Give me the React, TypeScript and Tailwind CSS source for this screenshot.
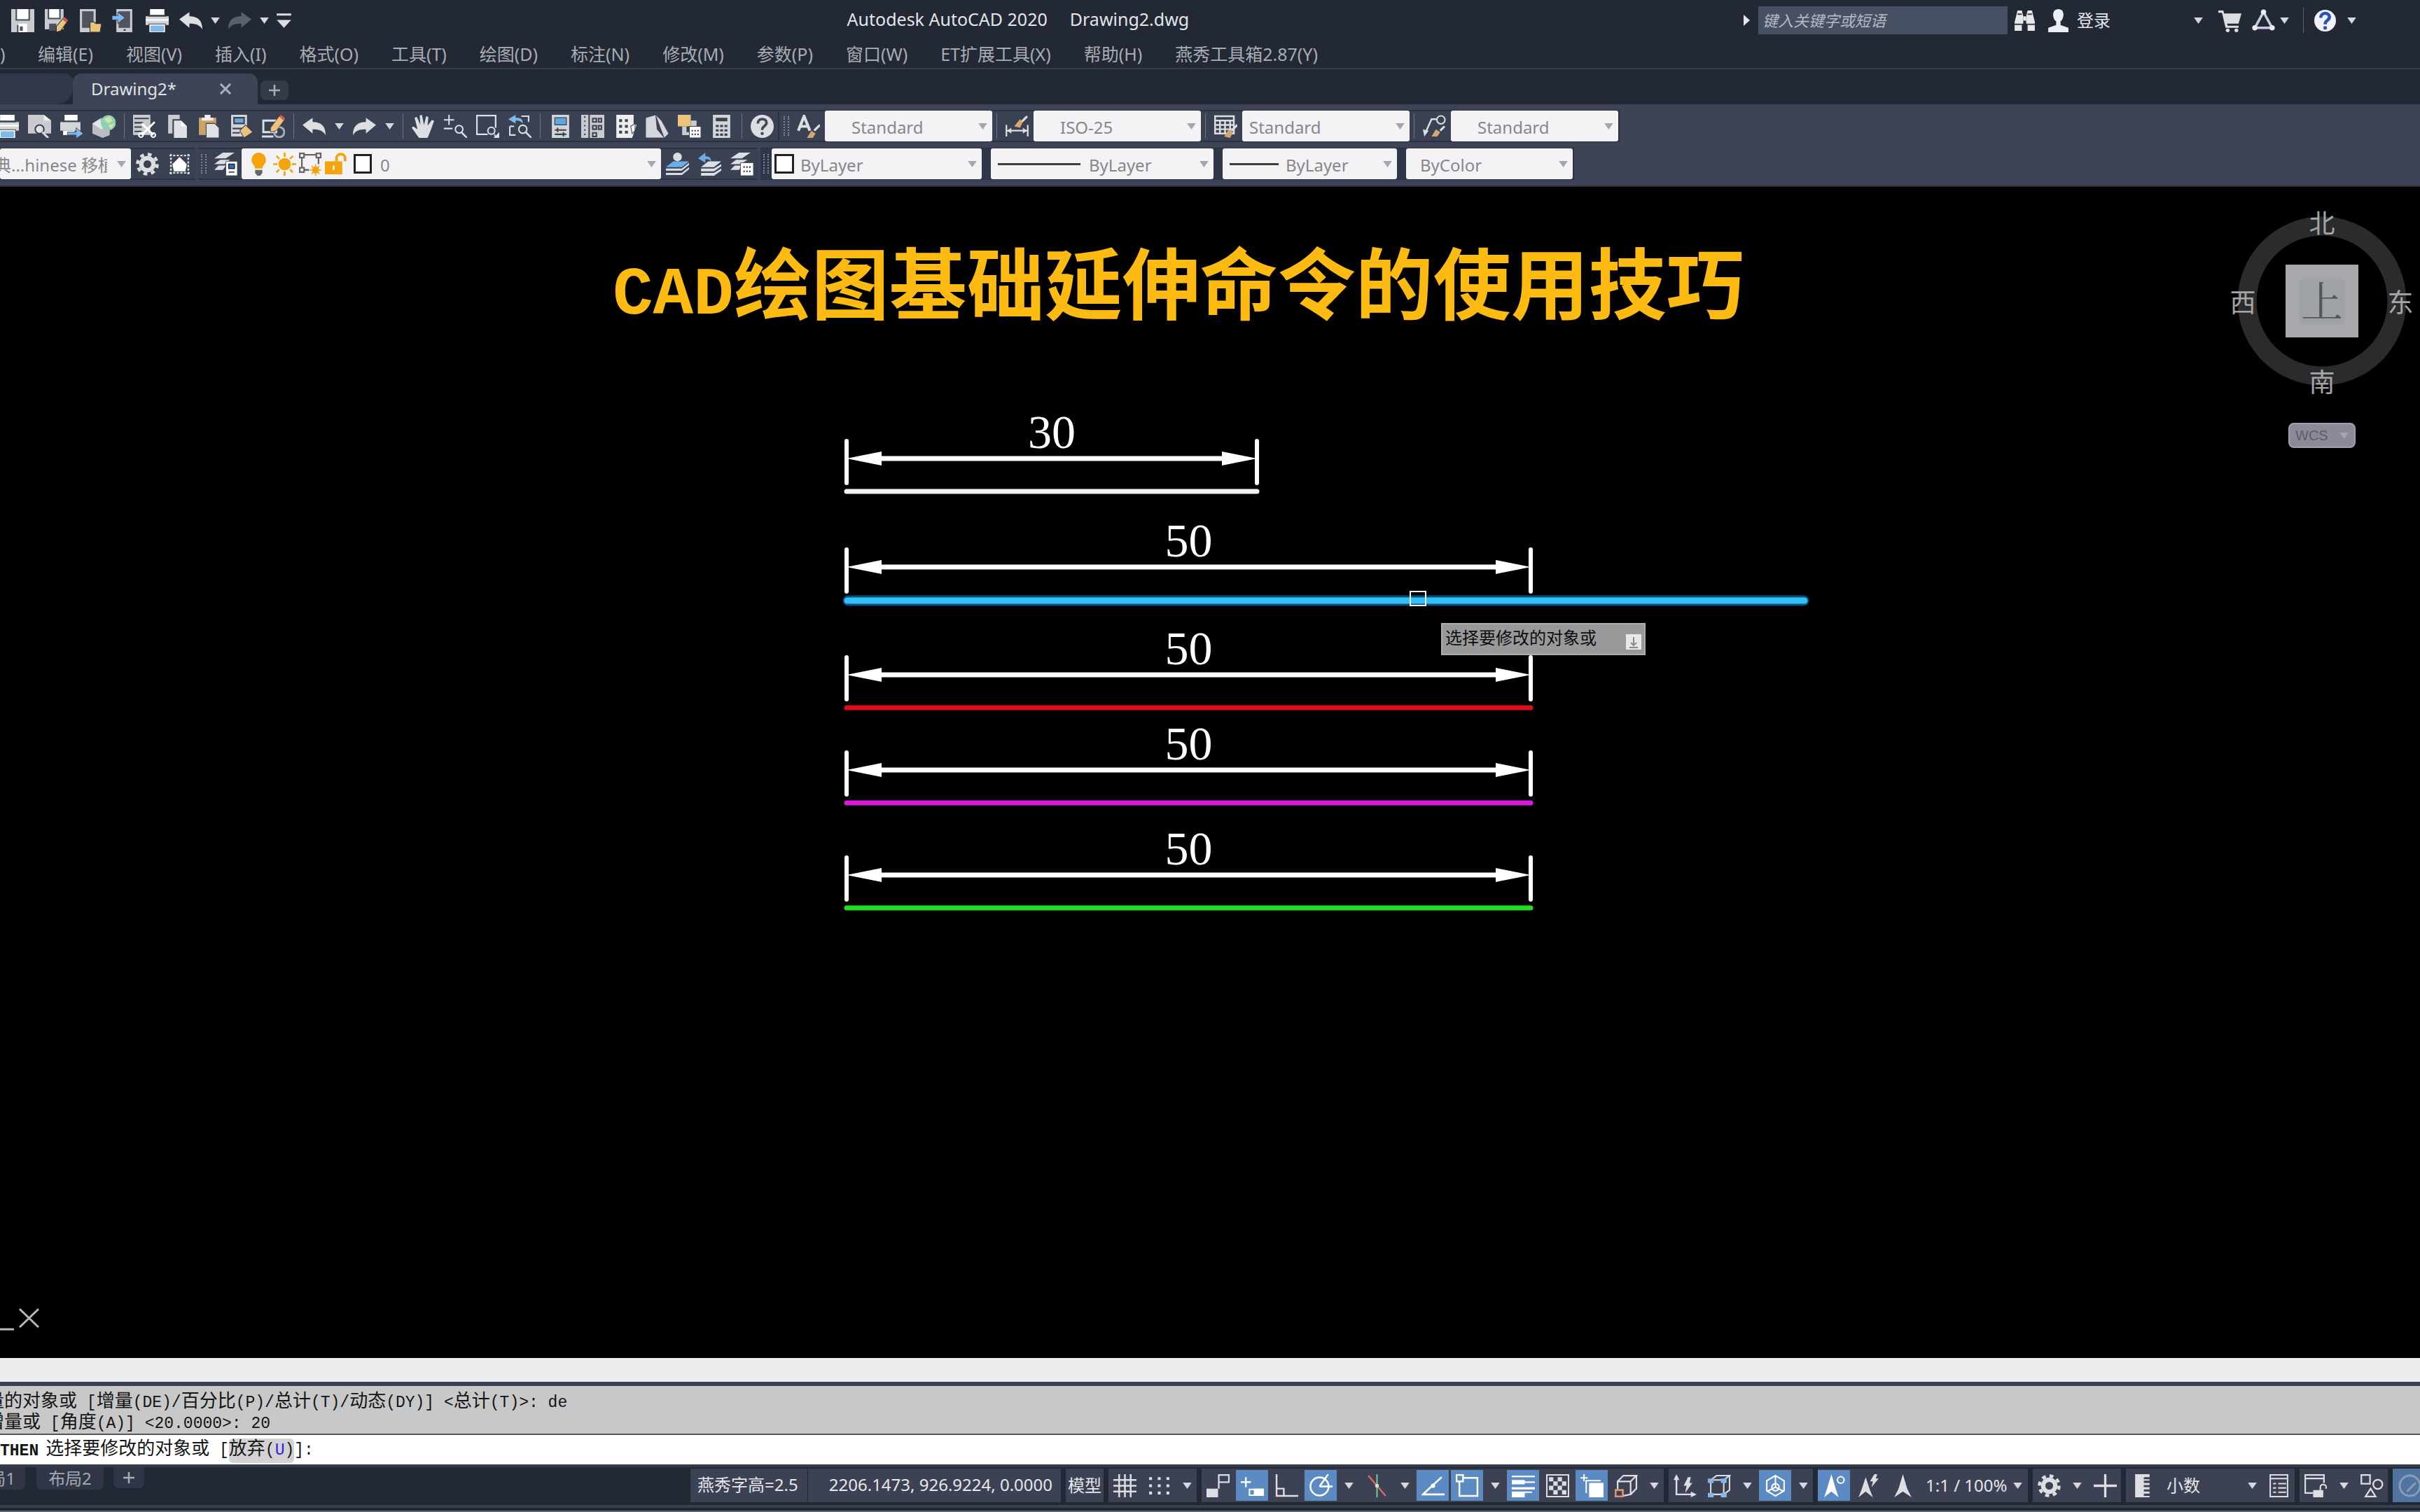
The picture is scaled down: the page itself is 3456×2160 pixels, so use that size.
import type { ReactNode } from "react";

const LIGHT = "#dcdee2";
const BLUE = "#7fb8ea";
const ORANGE = "#f5a30a";
const SAND = "#ecc477";

// every icon is drawn on a 16 x 16 grid
const icons: Record<string, ReactNode> = {
  save: (
    <>
      <path fill="#c9cbd0" d="M0 0h16v16H0z" />
      <path fill="#fff" d="M4 0h8v7H4zM5 10h6v6H5z" />
      <path fill="#4a505e" d="M3 0h1v7h8V0h1v8H3zM4 11h1v5H4zM6 12h2v3H6z" />
    </>
  ),
  saveAs: (
    <>
      <path fill="#c9cbd0" d="M0 0h13v14H0z" />
      <path fill="#fff" d="M3 0h7v6H3z" />
      <path fill="#4a505e" d="M2 0h1v6h7V0h1v7H2zM3 10h5v5H3z" />
      <path fill={SAND} stroke="#2a303b" strokeWidth=".5" d="M8 12l5-6 3 2-5 7-3 1z" />
      <path fill="#d9534f" d="M12 7l1.500-1.500L16 7.500 15 9.500z" />
    </>
  ),
  openMobile: (
    <>
      <path fill="#c9cbd0" d="M1 0h11v16H1z" />
      <path fill="#4f545f" d="M2.500 1.500h8V13h-8z" />
      <path fill={SAND} stroke="#2a303b" strokeWidth=".5" d="M8 16V9h3l1 1h4l-1 6z" />
    </>
  ),
  saveMobile: (
    <>
      <path fill="#c9cbd0" d="M3 0h11v16H3z" />
      <path fill="#4f545f" d="M4.500 1.500h8V13h-8z" />
      <path fill={BLUE} stroke="#2a303b" strokeWidth=".4" d="M0 4.500h4V2l5 4-5 4V7.500H0z" />
      <path fill="#333" d="M8 14h1.500v1H8z" />
    </>
  ),
  print: (
    <>
      <path fill="#fff" d="M3 0h10v5H3z" />
      <path fill="#d3d5d9" d="M0 5h16v6H0z" />
      <path fill="#fff" d="M0 7h16v1H0z" />
      <path fill="#39404e" d="M2 4h12v1.200H2zM2 10h12v1H2z" />
      <path fill={BLUE} stroke="#fff" strokeWidth=".8" d="M3 11h10v5H3z" />
    </>
  ),
  undo: <path fill={LIGHT} d="M0 7l7-5v3c6 0 9 3 9 9-2-3-4-4-9-4v3z" />,
  redo: <path fill={LIGHT} d="M16 7L9 2v3c-6 0-9 3-9 9 2-3 4-4 9-4v3z" />,
  redoOff: <path fill="#5b616c" d="M16 7L9 2v3c-6 0-9 3-9 9 2-3 4-4 9-4v3z" />,
  customize: <path fill={LIGHT} d="M3 3h10v1.500H3zM3 7.500h10L8 13z" />,
  preview: (
    <>
      <path fill="#c9cbd0" d="M0 0h11l5 4v9H0z" />
      <path fill="#eee" d="M11 0v4h5z" />
      <circle cx="8" cy="10" r="3" fill="#dfe1e4" stroke="#39404e" />
      <path stroke={LIGHT} strokeWidth="1.500" d="M10 12l4 4" />
    </>
  ),
  publish: (
    <>
      <path fill="#fff" d="M3 0h9v5H3z" />
      <path fill="#d3d5d9" d="M0 5h14v6H0z" />
      <path fill="#39404e" d="M2 4h11v1H2z" />
      <path fill="#fff" d="M2 11h8v3H2z" />
      <path fill={BLUE} stroke="#39404e" strokeWidth=".4" d="M5 12h6V9l5 4-5 3.500V14H5z" />
    </>
  ),
  globe: (
    <>
      <path fill="#b9bcc2" d="M0 6l6-4 6 6v6l-5 2-7-3z" />
      <path fill="#e4e5e8" d="M0 6l5-3 4 5-3 2z" />
      <circle cx="11" cy="5.500" r="5.200" fill="#8fd0b4" />
      <path fill="#cfe6a5" d="M8 3l4-2 2 3-3 2zM11 7l4-1-2 4z" />
    </>
  ),
  cut: (
    <>
      <path fill="#c9cbd0" d="M0 0h12v14H0z" />
      <path stroke="#39404e" d="M1 2.500h10M1 5.500h6M1 8.500h5M1 11.500h5" />
      <path stroke="#fff" strokeWidth="1.400" d="M6 6l8 8M15 5l-9 9" />
      <circle cx="5.500" cy="14" r="1.500" fill="none" stroke="#fff" />
      <circle cx="14" cy="14" r="1.500" fill="none" stroke="#fff" />
    </>
  ),
  copy: (
    <>
      <path fill="#c9cbd0" d="M2 0h8v3H5v10H2z" />
      <path fill="#dfe1e4" d="M6 4h5l4 4v8H6z" />
      <path fill="#fff" d="M11 4v4h4z" />
    </>
  ),
  paste: (
    <>
      <path fill="#c8a266" d="M1 2h12v12H1z" />
      <path fill="#eee" d="M5 0h4v2h2v2H3V2h2z" />
      <path fill="#dfe1e4" stroke="#39404e" strokeWidth=".5" d="M6 6h6l3 3v7H6z" />
    </>
  ),
  match: (
    <>
      <path fill="#d3d5d9" d="M1 0h11v15H1z" />
      <path fill="#6fa9dc" stroke="#39404e" d="M3 2h7v4H3z" />
      <path stroke="#39404e" d="M2 9.500h9M2 12.500h5" />
      <path fill={SAND} stroke="#39404e" strokeWidth=".5" d="M7 11l4-4 5 5-6 4z" />
    </>
  ),
  blockEdit: (
    <>
      <path fill="none" stroke={LIGHT} strokeWidth="1.400" d="M1 4h9v8H1zM0 15h8" />
      <circle cx="12" cy="12" r="3.500" fill="none" stroke="#a9adb5" strokeWidth="1.400" />
      <path fill={SAND} stroke="#39404e" strokeWidth=".4" d="M6 9l6-8 4 2-6 8-4 1z" />
      <path fill="#d9534f" d="M12 1l1-1 3 2-1 2z" />
    </>
  ),
  hand: (
    <path fill={LIGHT} d="M5 16L0 9l1-1 3 2L2 2l1.500-.5L6 7l-.5-6.500L7 0l1.500 7L10 1l1.500.4L11 7.500l3-4 1.500.7L13 11l-2 5z" />
  ),
  zoomRealtime: (
    <>
      <path stroke={LIGHT} d="M3.500 0v7M0 3.500h7M0 9.500h6" />
      <circle cx="10.500" cy="10" r="2.600" fill="none" stroke={LIGHT} />
      <path stroke={LIGHT} strokeWidth="1.200" d="M12 12l4 4" />
    </>
  ),
  zoomWindow: (
    <>
      <path fill="none" stroke={LIGHT} strokeWidth="1.100" d="M13.500 9V.5H.5v13H8" />
      <circle cx="10.500" cy="11" r="2.400" fill="none" stroke={LIGHT} />
      <path fill={LIGHT} d="M16 12v4h-4zM12 12l2 3-1 1z" />
    </>
  ),
  zoomPrevious: (
    <>
      <path fill={BLUE} d="M0 3l5-3v2c4 0 5 1 5 4-2-2-3-2-5-2v2z" />
      <path fill="none" stroke={LIGHT} d="M9 1h5v4M1 8v6h4M1 8h3" />
      <circle cx="10" cy="10" r="2.800" fill="none" stroke={LIGHT} />
      <path stroke={LIGHT} strokeWidth="1.200" d="M12 12l4 4" />
    </>
  ),
  properties: (
    <>
      <path fill="#d3d5d9" d="M2 0h12v16H2z" />
      <path fill="#5fa6e2" stroke="#39404e" strokeWidth=".6" d="M4 2h8v5H4z" />
      <path stroke="#39404e" d="M4 10.500h8M4 13.500h8M6 9v3M10 12v3" />
    </>
  ),
  designCenter: (
    <>
      <path fill="#c9cbd0" d="M0 0h16v16H0z" />
      <path stroke="#39404e" d="M5.500 0v16" />
      <path stroke="#39404e" strokeDasharray="1 2" d="M2.500 1v14" />
      <path fill="none" stroke="#39404e" d="M8 2.500h2.500V5H8zM12 2.500h2V5h-2zM8 7.500h2.500V10H8zM12 7.500h2V10h-2zM8 12.500h2.500V15H8z" />
    </>
  ),
  toolPalettes: (
    <>
      <path fill="#eceded" d="M2 0h12v6l2 1-3 9H2z" />
      <path fill="#39404e" d="M4 3h2v2H4zM8 3h2v2H8zM4 7h2v2H4zM8 7h2v2H8zM4 11h2v2H4zM8 11h2v2H8z" />
      <path fill="#fff" stroke="#39404e" strokeWidth=".5" d="M12 8l3-2v5l-2 2z" />
    </>
  ),
  sheetSet: <path fill="#d3d5d9" stroke="#39404e" strokeWidth=".4" d="M0 2l7-2 4 4 5 9-3 3H0zM7 0l1 10 5 6" />,
  markup: (
    <>
      <path fill={SAND} d="M0 0h9v8H0z" />
      <path fill="#c9cbd0" d="M9 4h4v6H9zM3 8h3v4h3V9h4l-3 5H3z" />
      <path fill="#fff" stroke="#39404e" strokeWidth=".5" d="M8 8h8v8H8z" />
      <path stroke="#39404e" d="M9.500 11h5M9.500 13.500h5" strokeDasharray="1 1" />
    </>
  ),
  calculator: (
    <>
      <path fill="#d3d5d9" d="M2 0h12v16H2z" />
      <path fill="#39404e" d="M4 2h8v2.500H4zM4 7h2v1.500H4zM7 7h2v1.500H7zM10 7h2v1.500h-2zM4 10h2v1.500H4zM7 10h2v1.500H7zM10 10h2v1.500h-2zM4 13h2v1.500H4zM7 13h2v1.500H7zM10 13h2v1.500h-2z" />
    </>
  ),
  help: (
    <>
      <circle cx="8" cy="8" r="8" fill={LIGHT} />
      <path fill="none" stroke="#454b58" strokeWidth="1.800" d="M5 6c0-4 6-4 6-.5C11 8 8 7.500 8 10.500" />
      <circle cx="8" cy="13" r="1.100" fill="#454b58" />
    </>
  ),
  textStyle: (
    <>
      <path fill="none" stroke={LIGHT} strokeWidth="2" d="M1 11L5 1l4 10M2.500 8h5" />
      <path stroke={LIGHT} strokeWidth="1.600" d="M12 11l4-4" />
      <path fill="#d2a871" d="M7 16l3-5 3 2-2 3z" />
    </>
  ),
  dimStyle: (
    <>
      <path stroke={LIGHT} strokeWidth="1.100" d="M.6 7v8M15.400 7v8M1 11h14" />
      <path fill={LIGHT} d="M1 11l3-2v4zM15 11l-3-2v4z" />
      <path stroke={LIGHT} strokeWidth="1.500" d="M11 5l4-4" />
      <path fill="#d2a871" d="M6 8l4-5 2 2-2 4z" />
    </>
  ),
  tableStyle: (
    <>
      <path fill="none" stroke={LIGHT} strokeWidth="1.200" d="M.6 1h13v12H.6zM.6 4h13M.6 7h13M.6 10h13M4 4v9M7.500 4v9M11 4v9" />
      <path stroke={LIGHT} strokeWidth="1.500" d="M12 11l4-4" />
      <path fill="#d2a871" d="M7 15l3-5 3 2-2 4z" />
    </>
  ),
  leaderStyle: (
    <>
      <path fill="none" stroke={LIGHT} strokeWidth="1.200" d="M2 12l4-9h4" />
      <path fill={LIGHT} d="M0 10l4 1-3 4z" />
      <circle cx="12.500" cy="3.500" r="2.800" fill="none" stroke={LIGHT} />
      <path stroke={LIGHT} strokeWidth="1.500" d="M12 11l3-3" />
      <path fill="#d2a871" d="M6 15l3-5 3 2-2 3z" />
    </>
  ),
  gear: (
    <>
      <circle cx="8" cy="8" r="6.800" fill="none" stroke={LIGHT} strokeWidth="2.200" strokeDasharray="2.700 2.640" />
      <circle cx="8" cy="8" r="4.200" fill="none" stroke={LIGHT} strokeWidth="3" />
    </>
  ),
  workspaceSave: (
    <>
      <path stroke={LIGHT} strokeDasharray="1.500 1" d="M1 2h14M1 14h14M2 1v14M14 1v14" strokeWidth="1.200" />
      <path fill="#fff" d="M8 3l5 5-1 5H4L3 8z" />
    </>
  ),
  layerProps: (
    <>
      <path fill={LIGHT} d="M6 0h8l-6 4H0zM4 5h7L7 8H0zM3 9h5l-2 3H0z" />
      <path fill="#fff" stroke="#39404e" strokeWidth=".4" d="M8 6h8v10H8z" />
      <path fill="#2f6fb4" stroke="#222" strokeWidth=".7" d="M10 8h4v3h-4z" />
      <path stroke="#222" strokeWidth=".7" d="M10 13.500h4" />
    </>
  ),
  layerCurrent: (
    <>
      <path fill="#6aaee8" d="M5 6h11l-5 4H0z" />
      <path fill={LIGHT} d="M0 11h11l5-4v1.500l-5 4H0zM0 14h11l5-4v1.500l-5 4H0z" />
      <circle cx="8" cy="3" r="3" fill={LIGHT} />
    </>
  ),
  layerPrevious: (
    <>
      <path fill="#6aaee8" d="M0 4l5-4v2.500c3 0 4 1 4 3.500-1-1-2-1.500-4-1.500V7z" />
      <path fill={LIGHT} d="M7 6h9l-5 4H2zM2 11h9l5-3v1.500l-5 3.500H2zM2 14h9l5-3v1.500L11 16H2z" />
    </>
  ),
  layerStates: (
    <>
      <path fill={LIGHT} d="M6 0h8l-6 4H0zM4 5h8L7 8H0zM3 9h5l-2 3H0z" />
      <path fill="#fff" stroke="#39404e" strokeWidth=".4" d="M7 7h9v9H7z" />
      <path stroke="#333" strokeDasharray="1 1" d="M9 10h5M9 13h5" />
    </>
  ),
  bulb: (
    <>
      <path fill={ORANGE} d="M8 0a5 5 0 015 5c0 3-2 3-2.500 6h-5C5 8 3 8 3 5a5 5 0 015-5z" />
      <path fill="#666" d="M5.500 12h5v2L9 16H7l-1.500-2z" />
    </>
  ),
  sun: (
    <>
      <circle cx="8" cy="8" r="4.300" fill={ORANGE} />
      <path stroke={ORANGE} strokeWidth="1.300" d="M8 0v3M8 13v3M0 8h3M13 8h3M2.300 2.300l2 2M11.700 11.700l2 2M13.700 2.300l-2 2M4.300 11.700l-2 2" />
    </>
  ),
  viewportSun: (
    <>
      <path fill="none" stroke="#666" strokeWidth="1.100" d="M4 1.500h8M4 12h3M2 4v6M13.500 3v5M.5.5h3v3h-3zM12 .5h3v3h-3zM.5 10.500h3v3h-3z" />
      <circle cx="11.500" cy="12" r="2.400" fill={ORANGE} />
      <path stroke={ORANGE} d="M11.500 8v8M7.500 12h8M8.800 9.300l5.400 5.400M14.200 9.300l-5.400 5.400" strokeWidth=".8" />
    </>
  ),
  unlock: (
    <>
      <path fill={ORANGE} d="M0 6h12v9H0z" />
      <path fill="none" stroke={ORANGE} strokeWidth="1.800" d="M8 6V4c0-4 6-4 6 0v2" />
      <path stroke="#fff" strokeWidth="1.200" d="M6 9v3" />
    </>
  ),
  binoculars: (
    <>
      <path fill="#e8e8ea" d="M3 1h3l1 4v5H6v5H1V9zM13 1h-3L9 5v5h1v5h5V9z" />
      <path stroke="#3a414d" d="M1 10.500h5M10 10.500h5M3 3.500h3M10 3.500h3" />
      <path fill="#e8e8ea" d="M7 5h2v3H7z" />
    </>
  ),
  user: <path fill="#eceef2" d="M8 0c5 0 4 7 1.500 8.500V11L15 13v3H1v-3l5.500-2V8.500C4 7 3 0 8 0z" />,
  cart: (
    <>
      <path fill={LIGHT} d="M0 1h3.500L4 3h12l-2 7H6l.5 1.500H14V13H5L2.500 2.500H0z" />
      <circle cx="6.500" cy="14.700" r="1.300" fill={LIGHT} />
      <circle cx="12.500" cy="14.700" r="1.300" fill={LIGHT} />
    </>
  ),
  appStore: (
    <>
      <path fill="none" stroke="#c7cbe6" strokeWidth="1.700" d="M8 2L2 13h12z" />
      <circle cx="8" cy="2" r="1.800" fill="#eceef2" />
      <circle cx="2" cy="13" r="1.800" fill="#eceef2" />
      <circle cx="14" cy="13" r="1.800" fill="#eceef2" />
    </>
  ),
  helpBlue: (
    <>
      <circle cx="8" cy="8" r="7.500" fill="#f1f3f8" />
      <path fill="none" stroke="#2c51b0" strokeWidth="2.200" d="M5 6c0-4 6-4 6-.5C11 8 8 7.500 8 10.500" />
      <circle cx="8" cy="13" r="1.300" fill="#2c51b0" />
    </>
  ),
  grid: <path stroke={LIGHT} strokeWidth="1.200" d="M4 0v16M8 0v16M12 0v16M0 4h16M0 8h16M0 12h16" />,
  snap: <path fill={LIGHT} d="M1 2h2v2H1zM7 2h2v2H7zM13 2h2v2h-2zM1 7h2v2H1zM7 7h2v2H7zM13 7h2v2h-2zM1 12h2v2H1zM7 12h2v2H7zM13 12h2v2h-2z" />,
  infer: (
    <>
      <path fill={LIGHT} d="M0 10h8v6H0z" />
      <path fill="none" stroke={LIGHT} strokeWidth="1.100" d="M8.500.5h7v5h-7zM8.500 5v5" />
    </>
  ),
  dynInput: (
    <>
      <path stroke="#fff" strokeWidth="1.200" d="M3.500 2v7M0 5.500h7" />
      <path fill="none" stroke="#fff" d="M6 10.500h9.500v4H6z" />
      <path fill="#fff" d="M9 10h7v5H9z" />
    </>
  ),
  ortho: <path fill="none" stroke={LIGHT} strokeWidth="1.200" d="M1 0v15h15M1 10h5v5" />,
  polar: (
    <>
      <circle cx="7" cy="8.500" r="6.300" fill="none" stroke="#fff" strokeWidth="1.200" />
      <path fill="none" stroke="#fff" strokeWidth="1.200" d="M7 8.500h9M7 8.500L13 0" />
    </>
  ),
  isodraft: (
    <>
      <path stroke="#6fd08a" d="M8 0v16" />
      <path stroke="#e0696b" strokeWidth="1.100" d="M2 1l12 14" />
      <circle cx="8" cy="8" r="1.300" fill={LIGHT} />
    </>
  ),
  snapTrack: (
    <>
      <path fill="none" stroke="#fff" strokeWidth="1.300" d="M14 2L1 14h15" />
      <circle cx="8" cy="8" r="1.500" fill="#fff" />
    </>
  ),
  osnap: <path fill="none" stroke="#fff" strokeWidth="1.200" d="M.5.500h4.500v4.500H.5zM5 2.500h10V15H2.500V5" />,
  lineweight: <path fill="#fff" d="M0 1h16v1H0zM0 4h9v3H0zM9 5h7v1H9zM0 9h16v1.500H0zM0 12h9v4H0zM9 12h5v1H9z" />,
  transparency: (
    <>
      <path fill="none" stroke={LIGHT} d="M.5.500h15v15H.5z" />
      <path fill={LIGHT} d="M2 2h3v3H2zM8 2h3v3H8zM5 5h3v3H5zM11 5h3v3h-3zM2 8h3v3H2zM8 8h3v3H8zM5 11h3v3H5zM11 11h3v3h-3z" />
    </>
  ),
  cycling: (
    <>
      <path stroke="#fff" d="M2.500 0v5M0 2.500h5" />
      <path fill="none" stroke="#fff" d="M4 13V4.500h10" />
      <path fill="#fff" d="M6 6h10v10H6z" />
    </>
  ),
  osnap3d: (
    <>
      <path fill="none" stroke={LIGHT} strokeWidth="1.100" d="M6 15l5-1V5H2v6M2 5l4-4h9L11 5M15 1v9l-4 4" />
      <path fill="none" stroke="#dc9468" strokeWidth="1.300" d="M.6 11h5v4.400h-5z" />
    </>
  ),
  dynUcs: (
    <>
      <path fill="none" stroke={LIGHT} strokeWidth="1.200" d="M2 2v12h12" />
      <path fill={LIGHT} d="M0 4l2-4 2 4zM12 12l4 2-4 2zM10 2L7 8h2l-1 5 5-7h-2l1-4z" />
    </>
  ),
  filter: (
    <>
      <path fill="none" stroke={LIGHT} d="M2 4h9v10H2zM2 4l4-3h9l-4 3M15 1v10l-4 3" />
      <path fill={BLUE} d="M0 3h4v3H0zM9 3h4v3H9zM0 13h4v3H0zM9 13h4v3H9z" />
    </>
  ),
  gizmo: (
    <>
      <path fill="none" stroke="#fff" d="M8 1l6 3.500v7L8 15l-6-3.500v-7zM8 1v8M8 9l6 3M8 9l-6 3" />
      <circle cx="8" cy="9" r="2.500" fill="none" stroke="#fff" />
    </>
  ),
  annoVisible: (
    <>
      <path fill="#fff" d="M6 0l3 10 2 6-5-4-5 4 2-6z" />
      <circle cx="12.500" cy="4" r="2.300" fill="none" stroke="#fff" />
    </>
  ),
  annoAuto: <path fill={LIGHT} d="M6 2l3 9 2 5-5-4-5 4 2-5zM12 0L9 5h2l-1 4 5-6h-2l1-3z" />,
  annoScale: <path fill={LIGHT} d="M8 0l3 10 3 6-6-4-6 4 3-6z" />,
  plus: <path fill={LIGHT} d="M7.200 0h1.600v7.200H16v1.600H8.800V16H7.200V8.800H0V7.200h7.200z" />,
  ruler: <path fill={LIGHT} d="M3 0h10v2H9v1.500h4v1H9V6h4v1.500H9V9h4v1.500H9V12h4v1.500H9V15h4v1H3z" />,
  quickProps: (
    <>
      <path fill="none" stroke={LIGHT} d="M2 .5h12v15H2zM2 3h12" />
      <path stroke={LIGHT} d="M4 6.500h2M4 9.500h2M4 12.500h2M7.500 6.500H13M7.500 9.500H13M7.500 12.500H13" />
    </>
  ),
  lockUi: (
    <>
      <path fill="none" stroke={LIGHT} strokeWidth="1.100" d="M6 13H.5V.5h13V6M.5 3h13" />
      <path fill={LIGHT} d="M6 11h7v5H6z" />
      <path fill="none" stroke={LIGHT} d="M11 11V9c0-2.500 4-2.500 4 0v1" />
    </>
  ),
  isolate: (
    <>
      <path fill="none" stroke={LIGHT} strokeWidth="1.100" d="M.6.600h6v6h-6zM7 10l3.500 5.500h-7z" />
      <circle cx="12" cy="7" r="3.200" fill="none" stroke={LIGHT} strokeWidth="1.100" />
    </>
  ),
  hardware: (
    <>
      <circle cx="8" cy="8" r="7" fill="none" stroke="#8c9cb2" strokeWidth="1.400" />
      <path stroke="#8c9cb2" strokeWidth="1.400" d="M6 12l6-6" />
    </>
  ),
};

function Glyph({ name }: { name: string }) {
  return (
    <svg viewBox="0 0 16 16" className="h-[33px] w-[33px] shrink-0" fill="none" aria-hidden="true">
      {icons[name]}
    </svg>
  );
}

function Caret({ className = "text-[#d6d8dc]" }: { className?: string }) {
  return (
    <svg viewBox="0 0 14 10" className={`h-[9px] w-[13px] shrink-0 ${className}`} aria-hidden="true">
      <path fill="currentColor" d="M0 0h14L7 10z" />
    </svg>
  );
}

function ToolButton({ name }: { name: string }) {
  return (
    <button type="button" aria-label={name} className="flex h-full w-[46px] shrink-0 items-center justify-center">
      <Glyph name={name} />
    </button>
  );
}

function CaretButton({ label, className = "w-[26px]" }: { label: string; className?: string }) {
  return (
    <button type="button" aria-label={label} className={`flex h-full shrink-0 items-center justify-center ${className}`}>
      <Caret />
    </button>
  );
}

function Divider() {
  return (
    <div className="flex h-full w-3 shrink-0 items-center justify-center">
      <div className="h-9 w-px bg-[#6d7382]" />
    </div>
  );
}

function Grip() {
  return <div className="mx-1 h-7 w-2 shrink-0 border-x-2 border-dotted border-[#7f8593]" />;
}

function Combo({ label, value, width, pad, children }: { label: string; value: string; width: string; pad: string; children?: ReactNode }) {
  return (
    <div className={`relative flex h-11 shrink-0 items-center overflow-hidden rounded-[3px] bg-[#f3f3f6] ${width}`}>
      {children}
      <select aria-label={label} className={`h-full min-w-0 flex-1 appearance-none bg-transparent pt-1 text-[24px] text-[#86878b] outline-none ${pad}`}>
        <option>{value}</option>
      </select>
      <Caret className="pointer-events-none absolute right-[7px] text-[#a5a6aa]" />
    </div>
  );
}

const toolGroups = [
  ["print", "preview", "publish", "globe"],
  ["cut", "copy", "paste", "match", "blockEdit"],
  ["undo", "|", "redo", "|"],
  ["hand", "zoomRealtime", "zoomWindow", "zoomPrevious"],
  ["properties", "designCenter", "toolPalettes", "sheetSet", "markup", "calculator"],
  ["help"],
];

const styleCombos = [
  { icon: "textStyle", label: "文字样式", value: "Standard", pad: "pl-[38px]" },
  { icon: "dimStyle", label: "标注样式", value: "ISO-25", pad: "pl-[38px]" },
  { icon: "tableStyle", label: "表格样式", value: "Standard", pad: "pl-[10px]" },
  { icon: "leaderStyle", label: "多重引线样式", value: "Standard", pad: "pl-[38px]" },
];

const menus = [
  "编辑(E)", "视图(V)", "插入(I)", "格式(O)", "工具(T)", "绘图(D)", "标注(N)", "修改(M)",
  "参数(P)", "窗口(W)", "ET扩展工具(X)", "帮助(H)", "燕秀工具箱2.87(Y)",
];

function TitleBar() {
  return (
    <div className="relative flex h-[58px] items-center">
      <div className="flex h-full items-center pl-[9px]">
        <div className="flex h-full items-center gap-[2px] pr-[2px]">
          <ToolButton name="save" />
          <ToolButton name="saveAs" />
          <ToolButton name="openMobile" />
          <ToolButton name="saveMobile" />
          <ToolButton name="print" />
        </div>
        <ToolButton name="undo" />
        <CaretButton label="放弃列表" className="w-6" />
        <ToolButton name="redoOff" />
        <CaretButton label="重做列表" className="w-6" />
        <button type="button" aria-label="customize">
          <Glyph name="customize" />
        </button>
      </div>
      <h1 className="absolute inset-x-0 top-[9px] flex gap-8 pl-[35%] text-[25px] leading-9 font-normal text-[#e3e5e8]">
        <span>Autodesk AutoCAD 2020</span>
        <span>Drawing2.dwg</span>
      </h1>
      <div className="relative ml-auto flex h-full items-center pr-[85px] text-[24px] text-[#e3e5e8]">
        <svg viewBox="0 0 9 16" className="mr-3 h-4 w-[9px]" aria-hidden="true">
          <path fill="#e3e5e8" d="M0 0l9 8-9 8z" />
        </svg>
        <input
          type="search"
          aria-label="搜索"
          placeholder="键入关键字或短语"
          className="h-10 w-[356px] bg-[#475063] px-[6px] text-[22px] text-white italic outline-none placeholder:text-[#b4b8c0]"
        />
        <button type="button" aria-label="搜索" className="ml-2"><Glyph name="binoculars" /></button>
        <button type="button" className="ml-[15px] flex items-center gap-[10px]">
          <Glyph name="user" />
          登录
        </button>
        <CaretButton label="登录选项" className="ml-28 w-[26px]" />
        <button type="button" aria-label="购物车" className="ml-4"><Glyph name="cart" /></button>
        <button type="button" aria-label="应用商店" className="ml-[15px]"><Glyph name="appStore" /></button>
        <CaretButton label="应用列表" />
        <div className="mx-[14px] h-9 w-px bg-[#5a606c]" />
        <button type="button" aria-label="帮助"><Glyph name="helpBlue" /></button>
        <CaretButton label="帮助列表" className="ml-2 w-[26px]" />
      </div>
    </div>
  );
}

function FileTabs() {
  return (
    <div className="flex h-[52px] items-end border-t-2 border-[#3a404c]">
      <div className="h-11 w-[104px] rounded-tr-xl rounded-br-3xl bg-[#31384a]" />
      <div className="flex h-11 w-[264px] items-center justify-between rounded-t-xl bg-[#3e4455] pr-[38px] pl-[26px] text-[24px] text-[#dfe1e5]">
        Drawing2*
        <button type="button" aria-label="关闭" className="text-[#aeb2bb]">
          <svg viewBox="0 0 16 16" className="h-4 w-4" aria-hidden="true">
            <path stroke="currentColor" strokeWidth="3" d="M1 1l14 14M15 1L1 15" />
          </svg>
        </button>
      </div>
      <button type="button" aria-label="新图形" className="mb-[6px] ml-1 flex h-7 w-10 items-center justify-center rounded-lg bg-[#333a48]">
        <svg viewBox="0 0 16 16" className="h-4 w-4" aria-hidden="true">
          <path stroke="#a9adb6" strokeWidth="2.500" d="M8 0v16M0 8h16" />
        </svg>
      </button>
    </div>
  );
}

function Toolbars() {
  return (
    <div className="flex flex-col gap-2 overflow-hidden border-b-2 border-[#2a2f3b] bg-[#3e4455] pt-2 pb-2">
      <div className="flex h-[46px] items-center">
        <div className="-ml-[13px] flex h-full items-center border-y-2 border-r-2 border-[#2c3241] bg-[#3a4153]">
          {toolGroups.map((group, i) => (
            <div key={i} className="flex h-full items-center">
              {i > 0 && <Divider />}
              {group.map((name, j) =>
                name === "|" ? <CaretButton key={j} label="列表" /> : <ToolButton key={j} name={name} />,
              )}
            </div>
          ))}
        </div>
        <div className="flex h-full items-center border-y-2 border-r-2 border-[#2c3241] bg-[#3a4153] pl-[2px]">
          <Grip />
          {styleCombos.map((combo, i) => (
            <div key={combo.icon} className="flex h-full items-center">
              {i > 0 && <Divider />}
              <ToolButton name={combo.icon} />
              <Combo label={combo.label} value={combo.value} width="ml-px w-[239px]" pad={combo.pad} />
            </div>
          ))}
        </div>
      </div>
      <div className="flex h-[46px] items-center gap-1">
        <div className="flex h-full items-center border-y-2 border-[#2c3241] bg-[#3a4153]">
          <Combo label="工作空间" value="典...hinese 移植" width="w-[187px]" pad="-ml-2 mr-[34px]" />
          <ToolButton name="gear" />
          <ToolButton name="workspaceSave" />
        </div>
        <div className="flex h-full items-center border-y-2 border-[#2c3241] bg-[#3a4153]">
          <Grip />
          <ToolButton name="layerProps" />
          <Combo label="图层" value="0" width="w-[599px]" pad="pl-3">
            <div className="flex items-center gap-1 pl-2">
              <Glyph name="bulb" />
              <Glyph name="sun" />
              <Glyph name="viewportSun" />
              <Glyph name="unlock" />
              <div className="ml-1 h-7 w-[26px] border-[3px] border-[#222] bg-white" />
            </div>
          </Combo>
          <ToolButton name="layerCurrent" />
          <ToolButton name="layerPrevious" />
          <ToolButton name="layerStates" />
        </div>
        <div className="flex h-full items-center gap-[13px] border-y-2 border-r-2 border-[#2c3241] bg-[#2f3647]">
          <div className="flex h-full items-center">
            <Grip />
            <Combo label="颜色" value="ByLayer" width="w-[300px]" pad="pl-[9px]">
              <div className="ml-1 h-7 w-7 border-[3px] border-[#222] bg-white" />
            </Combo>
          </div>
          <Combo label="线型" value="ByLayer" width="w-[318px]" pad="pl-3">
            <div className="ml-[10px] h-[3px] w-[118px] bg-[#3d3d40]" />
          </Combo>
          <Combo label="线宽" value="ByLayer" width="w-[249px]" pad="pl-[10px]">
            <div className="ml-[10px] h-[3px] w-[70px] bg-[#3d3d40]" />
          </Combo>
          <Combo label="打印样式" value="ByColor" width="w-[238px]" pad="pl-5" />
        </div>
      </div>
    </div>
  );
}

const LEFT = 1209;

const dimensions = [
  { y: 388, right: 1795, text: "30", color: "#f2f2f2" },
  { y: 543, right: 2186, text: "50", color: "" },
  { y: 697, right: 2186, text: "50", color: "#dd0f14" },
  { y: 833, right: 2186, text: "50", color: "#dd17dd" },
  { y: 983, right: 2186, text: "50", color: "#1fe01f" },
];

function Dimension({ y, right, text, color }: (typeof dimensions)[number]) {
  return (
    <g>
      <path stroke="#fff" strokeWidth="6" strokeLinecap="round" d={`M${LEFT} ${y - 25}v60M${right} ${y - 25}v60`} />
      <path stroke="#fff" strokeWidth="7" d={`M${LEFT + 40} ${y}H${right - 40}`} />
      <path fill="#fff" d={`M${LEFT} ${y}l50-10v20zM${right} ${y}l-50-10v20z`} />
      <text x={(LEFT + right) / 2} y={y - 15} textAnchor="middle" fill="#fff" className="font-['Liberation_Serif',serif] text-[68px]">
        {text}
      </text>
      {color && <path stroke={color} strokeWidth="7" strokeLinecap="round" d={`M${LEFT} ${y + 47}H${right}`} />}
    </g>
  );
}

function ViewCube() {
  return (
    <div className="absolute top-[23px] right-0 flex w-[280px] flex-col items-center">
      <svg viewBox="0 0 280 280" className="h-[280px] w-[280px] font-['Noto_Sans_CJK_SC',sans-serif]">
        <circle cx="140" cy="140" r="107" fill="none" stroke="#2b2b2d" strokeWidth="27" />
        <path fill="#a9a7ac" d="M88 88h104v104H88z" />
        <path fill="#9fa3a8" d="M108 109h64v64h-64z" />
        <g fill="#a5a5a5" fontSize="37" textAnchor="middle">
          <text x="140" y="43">北</text>
          <text x="140" y="270">南</text>
          <text x="27" y="156">西</text>
          <text x="252" y="156">东</text>
        </g>
        <text x="140" y="163" textAnchor="middle" fontSize="60" fill="#55565c" className="font-['Noto_Serif_CJK_SC','Noto_Sans_CJK_SC',serif]">
          上
        </text>
      </svg>
      <button type="button" className="mt-[34px] flex h-9 w-24 items-center justify-between rounded-lg border-2 border-[#a09fab] bg-[#8b8a97] px-2 font-['Liberation_Sans',sans-serif] text-[20px] text-[#5f5e69]">
        WCS
        <Caret className="text-[#a5a4b0]" />
      </button>
    </div>
  );
}

function Canvas() {
  return (
    <main className="relative min-h-[1100px] flex-1 overflow-hidden bg-black">
      <h2 className="absolute top-[77px] left-[875px] flex items-baseline text-[111px] leading-none font-bold whitespace-nowrap text-[#fdbb12]">
        <span className="font-['Liberation_Mono',monospace] text-[96px]">CAD</span>
        <span className="font-['Noto_Sans_CJK_SC',sans-serif]">绘图基础延伸命令的使用技巧</span>
      </h2>
      <svg className="absolute inset-0 h-full w-full" aria-label="图形">
        {dimensions.map((dim) => (
          <Dimension key={dim.y} {...dim} />
        ))}
        {/* highlighted line under the pick box */}
        <path stroke="#0b4a7a" strokeWidth="15" strokeLinecap="round" d="M1211 591H2576" />
        <path stroke="#32c1f5" strokeWidth="9" strokeLinecap="round" d="M1210 591H2577" />
        <path fill="none" stroke="#f4f4f4" strokeWidth="2" d="M2014 578h22v20h-22z" />
      </svg>
      <div className="absolute top-[623px] left-[2058px] flex h-[46px] w-[292px] items-center justify-between border-2 border-[#aeaeb1] bg-[#99999b] px-1 text-[24px] leading-none text-[#0d0d0d]">
        <span className="mb-1">选择要修改的对象或</span>
        <svg viewBox="0 0 22 22" className="mt-2 h-[22px] w-[22px]" aria-hidden="true">
          <path fill="#e7e7e9" d="M0 0h22v22H0z" />
          <path stroke="#8a8a8d" strokeWidth="2" d="M11 4v12M7 12l4 4 4-4M5 19h12" fill="none" />
        </svg>
      </div>
      <ViewCube />
      <svg viewBox="0 0 60 40" className="absolute bottom-[35px] left-0 h-10 w-[60px]" aria-label="UCS">
        <path fill="none" stroke="#b9b9b9" strokeWidth="3" d="M0 34h20M28 5l27 26M55 5L28 31" />
      </svg>
    </main>
  );
}

// the command font is half-width for latin and full-width for chinese
function CommandText({ text }: { text: string }) {
  return (
    <>
      {text.split(/([\u4e00-\u9fff]+)/).map((part, i) => (
        <span key={i} className={i % 2 ? "text-[26px]" : "text-[23px]"}>{part}</span>
      ))}
    </>
  );
}

function CommandWindow() {
  return (
    <section className="overflow-hidden font-['Liberation_Mono','Noto_Sans_CJK_SC',monospace] whitespace-pre text-[#141414]">
      <div className="h-[34px] bg-[#ececee]" />
      <div className="h-[6px] bg-[#3b4050]" />
      <div className="h-[70px] border-b-2 border-[#55565b] bg-[#c8c8c9] pt-2">
        <p className="-ml-5 h-[30px] leading-[30px]"><CommandText text="量的对象或 [增量(DE)/百分比(P)/总计(T)/动态(DY)] <总计(T)>: de" /></p>
        <p className="-ml-5 h-[30px] leading-[30px]"><CommandText text="增量或 [角度(A)] <20.0000>: 20" /></p>
      </div>
      <label className="flex h-[42px] items-center bg-white pt-[3px] leading-8">
        <span className="mr-[10px] text-[23px] font-bold">THEN</span>
        <span>
          <CommandText text="选择要修改的对象或 [" />
          <span className="inline-block rounded-md bg-[#d2d2d4]">
            <CommandText text="放弃(" />
            <span className="text-[23px] text-[#2a22e0]">U</span>
            <CommandText text=")" />
          </span>
          <CommandText text="]:" />
        </span>
        <input type="text" className="h-full min-w-0 flex-1 bg-transparent pl-2 text-[23px] outline-none" />
      </label>
    </section>
  );
}

function StatusGroup({ items }: { items: string[] }) {
  return (
    <div className="flex h-12 shrink-0 items-center gap-[3px] bg-[#3c4254]">
      {items.map((item, i) => {
        if (item === "|") return <CaretButton key={i} label="选项" className="w-7" />;
        const on = item.startsWith("*");
        const name = on ? item.slice(1) : item;
        return (
          <button
            key={i}
            type="button"
            aria-label={name}
            aria-pressed={on}
            className={`flex h-11 w-[46px] items-center justify-center ${on ? "bg-[#5c8bc3]" : ""}`}
          >
            <Glyph name={name} />
          </button>
        );
      })}
    </div>
  );
}

function StatusBar() {
  return (
    <footer className="bg-[#222934] text-[24px] text-[#e6e7ea]">
      <div className="flex h-[58px] items-start overflow-hidden border-t-4 border-[#343a48]">
        <nav className="flex items-start text-[#a4a8b1]">
          <button type="button" className="flex h-8 w-9 justify-end overflow-hidden rounded-br-lg bg-[#303645] pr-[14px] leading-8 whitespace-nowrap">
            局1
          </button>
          <button type="button" className="ml-4 h-8 w-24 rounded-b-lg bg-[#303645] leading-8">布局2</button>
          <button type="button" aria-label="新建布局" className="ml-[14px] flex h-[30px] w-11 items-center justify-center rounded-b-lg bg-[#303645]">
            <svg viewBox="0 0 16 16" className="h-4 w-4" aria-hidden="true">
              <path stroke="#a9adb6" strokeWidth="2.500" d="M8 0v16M0 8h16" />
            </svg>
          </button>
        </nav>
        <div className="mt-[2px] ml-auto flex gap-[7px] leading-[46px]">
          <div className="flex h-12 gap-px whitespace-nowrap">
            <div className="w-[167px] bg-[#3c4254] pl-[10px]">燕秀字高=2.5</div>
            <div className="w-[361px] bg-[#3c4254] pr-3 text-right">2206.1473, 926.9224, 0.0000</div>
          </div>
          <button type="button" className="h-12 w-[54px] bg-[#3c4254]">模型</button>
          <StatusGroup items={["grid", "snap", "|"]} />
          <StatusGroup items={["infer", "*dynInput", "ortho", "*polar", "|", "isodraft", "|", "*snapTrack", "*osnap", "|", "*lineweight", "transparency", "*cycling", "osnap3d", "|"]} />
          <StatusGroup items={["dynUcs", "filter", "|", "*gizmo", "|"]} />
          <div className="flex h-12 bg-[#3c4254]">
            <StatusGroup items={["*annoVisible", "annoAuto", "annoScale"]} />
            <button type="button" className="flex w-[156px] items-center justify-between pr-2 pl-[10px] whitespace-nowrap">
              1:1 / 100%
              <Caret />
            </button>
          </div>
          <StatusGroup items={["gear", "|", "plus"]} />
          <div className="flex h-12 bg-[#3c4254]">
            <StatusGroup items={["ruler"]} />
            <div className="relative flex w-[149px] items-center">
              <select aria-label="单位" className="h-full w-full appearance-none bg-transparent pl-3 outline-none">
                <option>小数</option>
              </select>
              <Caret className="pointer-events-none absolute right-2 text-[#d6d8dc]" />
            </div>
            <StatusGroup items={["quickProps"]} />
          </div>
          <StatusGroup items={["lockUi", "|", "isolate"]} />
          <button type="button" aria-label="hardware" className="flex h-12 w-[39px] items-center overflow-hidden bg-[#4f749f] pl-2">
            <Glyph name="hardware" />
          </button>
        </div>
      </div>
      <div className="flex h-[10px] items-end border-t-4 border-[#3a4050]">
        <div className="h-[2px] w-full bg-[#5d6572]" />
      </div>
    </footer>
  );
}

export default function App() {
  return (
    <div className="flex min-h-screen flex-col overflow-hidden bg-[#222934] font-['Noto_Sans','Noto_Sans_CJK_SC',sans-serif]">
      <header>
        <TitleBar />
        <nav className="flex h-[39px] items-center overflow-hidden text-[25px] text-[#a9acb3]">
          <span className="w-[54px]">)</span>
          <div className="flex gap-[47px] whitespace-nowrap">
            {menus.map((menu) => (
              <button key={menu} type="button">{menu}</button>
            ))}
          </div>
        </nav>
        <FileTabs />
        <Toolbars />
      </header>
      <Canvas />
      <CommandWindow />
      <StatusBar />
    </div>
  );
}
